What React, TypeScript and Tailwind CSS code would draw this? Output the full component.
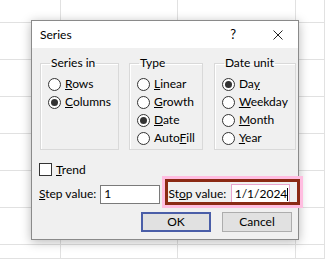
import React from 'react';

const font = { fontFamily: 'Lato, "Liberation Sans", Arial, sans-serif' };

function Radio({ checked, children }: { checked?: boolean; children: React.ReactNode }) {
  return (
    <div className="flex items-center h-[18px]">
      <span className="w-[13px] h-[13px] rounded-full border border-[#333] bg-white flex items-center justify-center shrink-0">
        {checked && <span className="w-[7px] h-[7px] rounded-full bg-[#333]" />}
      </span>
      <span className="ml-[4px]">{children}</span>
    </div>
  );
}

function Group({ title, width, children }: { title: string; width: string; children: React.ReactNode }) {
  return (
    <fieldset className={`${width} h-[95px] border border-[#d9d9d9] shadow-[inset_1px_1px_0_#fff] px-[7px] pt-[4px]`}>
      <legend className="px-[1px] ml-[2px] leading-[16px]">{title}</legend>
      {children}
    </fieldset>
  );
}

export default function App() {
  const cells = Array.from({ length: 32 });
  return (
    <div className="relative w-[325px] h-[259px] overflow-hidden bg-white text-[12px] text-black" style={font}>
      {/* sheet grid */}
      <div className="grid grid-cols-[61px_117px_118px_1fr] grid-rows-[23px_37px_37px_37px_37px_37px_37px_1fr] h-full">
        {cells.map((_, i) => (
          <div key={i} className="border-r border-b border-[#e1e1e1]" />
        ))}
      </div>

      {/* dialog */}
      <div className="absolute left-[31px] top-[20px] w-[268px] h-[220px] border border-[#8a8a8a] bg-[#f0f0f0] shadow-[0_2px_10px_rgba(0,0,0,0.28)] flex flex-col">
        <div className="h-[27px] bg-white flex items-center pl-[8px] shrink-0">
          <span>Series</span>
          <span className="ml-auto mr-[37px] text-[13px]">?</span>
          <svg width="10" height="10" viewBox="0 0 10 10" className="mr-[15px]">
            <path d="M0.5 0.5L9.5 9.5M9.5 0.5L0.5 9.5" stroke="#222" strokeWidth="1" />
          </svg>
        </div>

        <div className="flex-1 px-[8px] pt-[7px]">
          <div className="flex">
            <Group title="Series in" width="w-[78px]">
              <Radio><u>R</u>ows</Radio>
              <Radio checked><u>C</u>olumns</Radio>
            </Group>
            <div className="ml-[10px]">
              <Group title="Type" width="w-[72px]">
                <Radio><u>L</u>inear</Radio>
                <Radio><u>G</u>rowth</Radio>
                <Radio checked><u>D</u>ate</Radio>
                <Radio>Auto<u>F</u>ill</Radio>
              </Group>
            </div>
            <div className="ml-[11px]">
              <Group title="Date unit" width="w-[80px]">
                <Radio checked>Da<u>y</u></Radio>
                <Radio><u>W</u>eekday</Radio>
                <Radio><u>M</u>onth</Radio>
                <Radio><u>Y</u>ear</Radio>
              </Group>
            </div>
          </div>

          <div className="flex items-center mt-[13px] h-[13px] -ml-[1px]">
            <span className="w-[13px] h-[13px] border border-[#333] bg-white" />
            <span className="ml-[4px]"><u>T</u>rend</span>
          </div>

          <div className="flex items-center mt-[8px] h-[20px] -ml-[1px]">
            <span className="w-[62px]"><u>S</u>tep value:</span>
            <div className="w-[60px] h-[19px] border border-[#7a7a7a] bg-white flex items-center pl-[3px]">1</div>
            <span className="ml-[9px] w-[63px]">St<u>o</u>p value:</span>
            <div className="w-[60px] h-[20px] border border-[#e8a6cf] bg-white flex items-center pl-[3px]">
              1/1/2024<span className="w-[1px] h-[13px] bg-black" />
            </div>
          </div>

          <div className="flex justify-end mt-[8px] gap-[11px] mr-[-2px]">
            <button className="w-[70px] h-[20px] border-2 border-[#4a5ea8] bg-[#e1e1e1] leading-none">OK</button>
            <button className="w-[70px] h-[20px] border border-[#adadad] bg-[#e1e1e1] leading-none">Cancel</button>
          </div>
        </div>
      </div>

      {/* highlight annotation */}
      <div className="absolute left-[162px] top-[176px] w-[141px] h-[32px] border-[3px] border-[#ffbde0]">
        <div className="w-full h-full border-[3px] border-[#8b2a14]" />
      </div>
    </div>
  );
}
